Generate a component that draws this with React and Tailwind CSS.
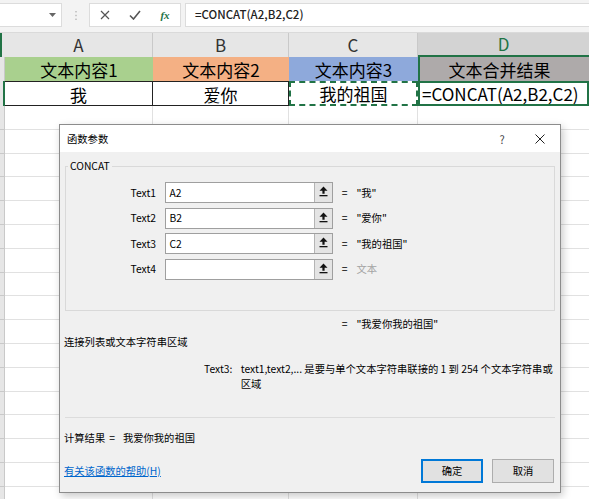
import React from 'react';

const FONT = "font-['Noto_Sans_CJK_SC',sans-serif]";
const GRID_ROWS = Array.from({ length: 17 });

function UploadIcon() {
    return (
        <svg width="9" height="11" viewBox="0 0 9 11">
            <path d="M4.5 0.5 L8.5 4.8 H5.6 V7.8 H3.4 V4.8 H0.5 Z" fill="#111" />
            <rect x="0.5" y="9" width="8" height="1.3" fill="#111" />
        </svg>
    );
}

function ArgRow({ label, value, result, muted }) {
    return (
        <div className="flex items-center h-[21px]">
            <div className="w-[90px] text-right">{label}</div>
            <div className="ml-[8.5px] w-[168.5px] h-[21px] bg-white border border-[#9f9f9f] flex">
                <div className="flex-1 pl-[4px] flex items-center">{value}</div>
                <div className="w-[18px] bg-[#e4e4e4] border-l border-[#b4b4b4] flex justify-center pt-[3px]">
                    <UploadIcon />
                </div>
            </div>
            <div className="ml-[8.7px]">=</div>
            <div className={`ml-[9px] ${muted ? 'text-[#a3a3a3]' : ''}`}>{result}</div>
        </div>
    );
}

export default function App() {
    return (
        <div className={`relative w-[589px] h-[499px] overflow-hidden bg-white ${FONT}`}>
            {/* formula bar */}
            <div className="h-[32px] bg-[#f3f3f3] flex items-start pt-[3px]">
                <div className="w-[62px] h-[24px] bg-white border border-l-0 border-[#dcdcdc] flex items-center justify-end pr-[5px]">
                    <svg width="7" height="4" viewBox="0 0 7 4"><path d="M0 0 H7 L3.5 4 Z" fill="#666" /></svg>
                </div>
                <div className="w-[27px] h-[24px] flex items-center justify-center">
                    <svg width="2" height="9" viewBox="0 0 2 9">
                        <rect x="0.3" y="0" width="1.4" height="1.4" fill="#b5b5b5" />
                        <rect x="0.3" y="3.8" width="1.4" height="1.4" fill="#b5b5b5" />
                        <rect x="0.3" y="7.6" width="1.4" height="1.4" fill="#b5b5b5" />
                    </svg>
                </div>
                <div className="w-[92px] h-[24px] bg-white border border-[#dcdcdc] flex items-center">
                    <span className="w-[30px] flex justify-center">
                        <svg width="10" height="10" viewBox="0 0 10 10"><path d="M1 1 L9 9 M9 1 L1 9" stroke="#555" strokeWidth="1.2" /></svg>
                    </span>
                    <span className="w-[30px] flex justify-center">
                        <svg width="12" height="10" viewBox="0 0 12 10"><path d="M1 5.5 L4.5 9 L11 1" stroke="#555" strokeWidth="1.6" fill="none" /></svg>
                    </span>
                    <span className="w-[30px] flex justify-center text-[11px] italic font-['Liberation_Serif',serif] text-[#217346] font-bold">fx</span>
                </div>
                <div className="ml-[4px] flex-1 h-[24px] bg-white border border-r-0 border-[#dcdcdc] flex items-center pl-[9px] text-[11.5px] font-medium text-[#222]">
                    =CONCAT(A2,B2,C2)
                </div>
            </div>

            {/* column headers */}
            <div className="flex h-[25px] bg-[#e6e6e6] text-[17px] text-[#333] border-t border-[#dadada]">
                <div className="w-[5px] flex">
                    <div className="w-[2px] h-full bg-[#217346]" />
                </div>
                <div className="w-[148px] border-r border-[#c9c9c9] flex items-center justify-center">A</div>
                <div className="w-[136px] border-r border-[#c9c9c9] flex items-center justify-center">B</div>
                <div className="w-[129px] border-r border-[#c9c9c9] flex items-center justify-center">C</div>
                <div className="flex-1 bg-[#d3d3d3] border-b-2 border-[#217346] text-[#217346] flex items-center justify-center">D</div>
            </div>

            {/* row 1 */}
            <div className="flex h-[24px] text-[17px] text-black">
                <div className="w-[5px] bg-[#e6e6e6] border-r border-[#c9c9c9]" />
                <div className="w-[148px] bg-[#a9d08e] flex items-center justify-center pt-[2px]">文本内容1</div>
                <div className="w-[136px] bg-[#f4b084] flex items-center justify-center pt-[2px]">文本内容2</div>
                <div className="w-[129px] bg-[#8ea9db] flex items-center justify-center pt-[2px]">文本内容3</div>
                <div className="flex-1 bg-[#aeaaaa] border-l-2 border-[#217346] flex items-center justify-center pt-[2px] pr-[10px]">文本合并结果</div>
            </div>

            {/* row 2 */}
            <div className="flex h-[25px] text-[17px] text-black">
                <div className="w-[5px] bg-[#e6e6e6] border-r-2 border-[#217346]" />
                <div className="w-[148px] border-y border-r border-[#222] flex items-center justify-center pt-[2px]">我</div>
                <div className="w-[136px] border-y border-r border-[#222] flex items-center justify-center pt-[2px]">爱你</div>
                <div className="w-[129px] border-2 border-dashed border-[#217346] flex items-center justify-center pt-[1px]">我的祖国</div>
                <div className="flex-1 border-2 border-[#217346] flex items-center pl-[2px] pt-[1px] whitespace-nowrap">=CONCAT(A2,B2,C2)</div>
            </div>

            {/* empty grid */}
            {GRID_ROWS.map((_, i) => (
                <div key={i} className="flex h-[23.8px]">
                    <div className="w-[5px] bg-[#e6e6e6] border-r border-b border-[#c9c9c9]" />
                    <div className="w-[148px] border-r border-b border-[#e1e1e1]" />
                    <div className="w-[136px] border-r border-b border-[#e1e1e1]" />
                    <div className="w-[129px] border-r border-b border-[#e1e1e1]" />
                    <div className="flex-1 border-b border-[#e1e1e1]" />
                </div>
            ))}

            {/* function arguments dialog */}
            <div className="absolute left-[59px] top-[124px] w-[502px] h-[369px] bg-[#f0f0f0] border border-[#8c8c8c] shadow-[2px_3px_8px_rgba(0,0,0,0.22)] flex flex-col text-[10.3px] text-black leading-[16px]">
                <div className="h-[27px] bg-white flex items-center pl-[7px]">
                    <span className="flex-1">函数参数</span>
                    <span className="w-[20px] mr-[18px] text-center text-[11px] text-[#444]">?</span>
                    <span className="w-[20px] mr-[10px] flex justify-center">
                        <svg width="10" height="10" viewBox="0 0 10 10"><path d="M0.5 0.5 L9.5 9.5 M9.5 0.5 L0.5 9.5" stroke="#222" strokeWidth="1" /></svg>
                    </span>
                </div>

                <div className="flex-1 px-[5px] flex flex-col">
                    <fieldset className="mt-[7px] border border-[#d9d9d9] pt-[9px] pb-[30px]">
                        <legend className="ml-[2px] px-[2px] leading-[14px]">CONCAT</legend>
                        <div className="flex flex-col gap-[4.5px]">
                            <ArgRow label="Text1" value="A2" result={'"我"'} />
                            <ArgRow label="Text2" value="B2" result={'"爱你"'} />
                            <ArgRow label="Text3" value="C2" result={'"我的祖国"'} />
                            <ArgRow label="Text4" value="" result="文本" muted />
                        </div>
                    </fieldset>

                    <div className="mt-[5px] flex pl-[276.7px]">
                        <span>=</span>
                        <span className="ml-[9px]">"我爱你我的祖国"</span>
                    </div>
                    <div className="mt-[2px] -ml-[1px]">连接列表或文本字符串区域</div>

                    <div className="mt-[11px] flex pl-[139px] leading-[15px]">
                        <div className="w-[36.7px]">Text3:</div>
                        <div className="whitespace-nowrap">
                            text1,text2,... 是要与单个文本字符串联接的 1 到 254 个文本字符串或
                            <br />
                            区域
                        </div>
                    </div>

                    <div className="mt-[26.5px] border-t border-[#dcdcdc]" />

                    <div className="mt-[12px] flex -ml-[1px]">
                        <span>计算结果</span>
                        <span className="ml-[4px]">=</span>
                        <span className="ml-[8px]">我爱你我的祖国</span>
                    </div>

                    <div className="mt-[13px] h-[24px] flex items-center">
                        <span className="flex-1 -ml-[1px] text-[#0066cc] underline">有关该函数的帮助(H)</span>
                        <button className="w-[62px] h-[24px] bg-[#e1e1e1] border-2 border-[#0078d7] flex items-center justify-center">确定</button>
                        <button className="ml-[9px] mr-[1px] w-[62px] h-[24px] bg-[#e1e1e1] border border-[#adadad] flex items-center justify-center">取消</button>
                    </div>
                </div>
            </div>
        </div>
    );
}
